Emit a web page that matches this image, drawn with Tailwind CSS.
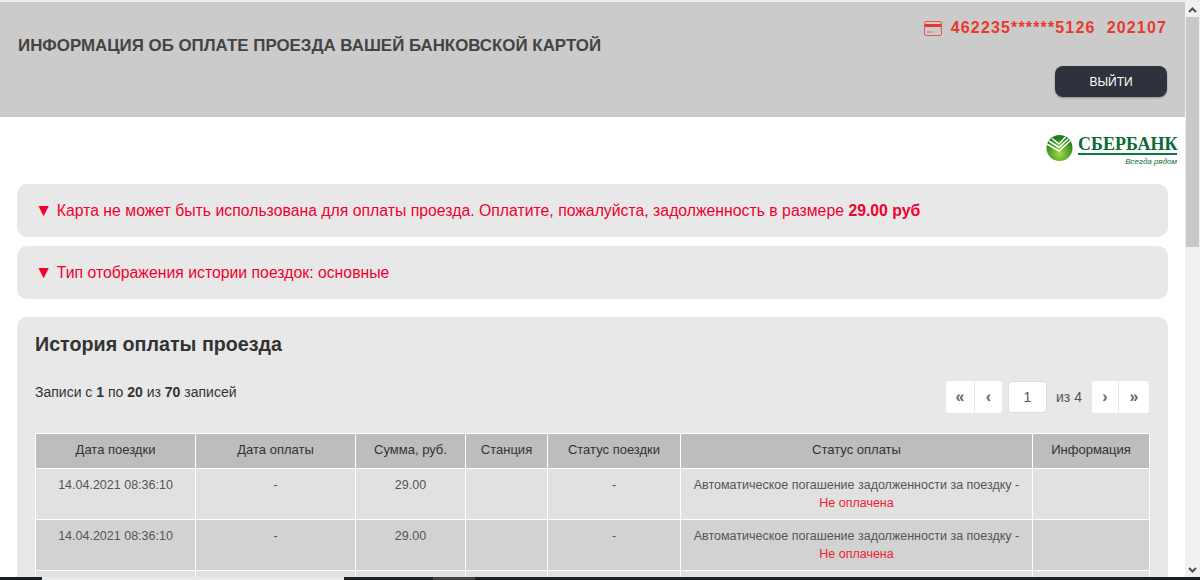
<!DOCTYPE html>
<html lang="ru">

<head>
    <meta charset="UTF-8">
    <title>История оплаты проезда</title>
    <script src="https://cdn.jsdelivr.net/npm/@tailwindcss/browser@4"></script>
</head>

<body class="h-[580px] overflow-hidden bg-white font-['Liberation_Sans',Arial,sans-serif] text-[#333]">
    <div class="flex h-[577px] overflow-hidden border-t-[2px] border-[#eeeeee]">
        <div class="min-w-0 flex-1 overflow-hidden">
            <!-- Header -->
            <header class="flex h-[115px] justify-between bg-[#cbcbcb] px-[18px]">
                <h1 class="mt-[34px] text-[16.9px] leading-[20px] font-bold text-[#444]">ИНФОРМАЦИЯ ОБ ОПЛАТЕ ПРОЕЗДА ВАШЕЙ БАНКОВСКОЙ КАРТОЙ</h1>
                <div class="flex flex-col items-end">
                    <div class="mt-[16px] flex h-[20px] items-center gap-[9px] text-[16px] font-bold tracking-[1.15px] text-[#e8392f]">
                        <svg width="18" height="15" viewBox="0 0 18 15" fill="none">
                            <rect x="0.5" y="0.5" width="17" height="14" rx="1.5" stroke="#e8574f" />
                            <rect x="1" y="3" width="16" height="3" fill="#e8392f" />
                            <path d="M3 11h3M7 11h2" stroke="#e8574f" />
                        </svg>
                        <span class="whitespace-pre">462235******5126  202107</span>
                    </div>
                    <button class="mt-[28px] h-[31px] w-[112px] rounded-[8px] bg-[#2f313c] text-[12px] text-white shadow-[0_1px_2px_rgba(0,0,0,0.3)]">ВЫЙТИ</button>
                </div>
            </header>

            <div class="px-[17px]">
                <!-- Logo -->
                <div class="mr-[-9px] flex h-[67px] justify-end pt-[18px]">
                    <div class="flex gap-[5px]">
                        <svg width="27" height="26" viewBox="0 0 27 26">
                            <defs>
                                <radialGradient id="sber" cx="0.5" cy="0.72" r="0.6">
                                    <stop offset="0" stop-color="#a6d94a" />
                                    <stop offset="0.6" stop-color="#55a82a" />
                                    <stop offset="1" stop-color="#1f7d1e" />
                                </radialGradient>
                            </defs>
                            <circle cx="13.500" cy="13" r="13" fill="url(#sber)" />
                            <path d="M1 9 13 16 24 6" stroke="#fff" stroke-width="1.500" fill="none" />
                            <path d="M3 6 13 12.500 22 4" stroke="#fff" stroke-width="1.500" fill="none" />
                            <path d="M6 3.500 13 9 19.500 2" stroke="#fff" stroke-width="1.500" fill="none" />
                        </svg>
                        <div class="mt-[2px] w-[99px]">
                            <div class="h-[18px] border-b-[2px] border-[#0b7a3b] font-['Liberation_Serif',serif] text-[18px] leading-[15px] font-bold text-[#0b6b36]">СБЕРБАНК</div>
                            <div class="mt-[2px] text-right text-[8px] leading-[10px] italic text-[#0b6b36]">Всегда рядом</div>
                        </div>
                    </div>
                </div>

                <!-- Notices -->
                <div class="flex h-[53px] items-center rounded-[10px] bg-[#e8e8e8] pl-[18px] text-[15.8px] text-[#f0002f]">
                    <span><span class="text-[17.5px] leading-[20px]">▼</span> Карта не может быть использована для оплаты проезда. Оплатите, пожалуйста, задолженность в размере <b>29.00 руб</b></span>
                </div>
                <div class="mt-[9px] flex h-[53px] items-center rounded-[10px] bg-[#e8e8e8] pl-[18px] text-[15.8px] text-[#f0002f]">
                    <span><span class="text-[17.5px] leading-[20px]">▼</span> Тип отображения истории поездок: основные</span>
                </div>

                <!-- History -->
                <section class="mt-[18px] h-[300px] rounded-t-[10px] bg-[#e8e8e8] px-[18px]">
                    <h2 class="pt-[15px] text-[19.7px] leading-[24px] font-bold text-[#333]">История оплаты проезда</h2>

                    <div class="mt-[16px] flex h-[61px] items-start justify-between">
                        <div class="mt-[10px] text-[14px] leading-[20px]">Записи с <b>1</b> по <b>20</b> из <b>70</b> записей</div>
                        <div class="mt-[9px] mr-[1px] flex items-center text-[14px] text-[#555]">
                            <div class="flex h-[32px] items-center overflow-hidden rounded-[3px] bg-white text-[16px] font-bold text-[#666]">
                                <span class="flex h-full w-[29px] items-center justify-center border-r border-[#e8e8e8]">«</span>
                                <span class="flex h-full w-[27px] items-center justify-center">‹</span>
                            </div>
                            <div class="ml-[6px] h-[32px] w-[39px] rounded-[4px] border border-[#ddd] bg-white text-center leading-[30px]">1</div>
                            <span class="ml-[9px] mr-[10px] w-[26px]">из 4</span>
                            <div class="flex h-[32px] items-center overflow-hidden rounded-[3px] bg-white text-[16px] font-bold text-[#666]">
                                <span class="flex h-full w-[27px] items-center justify-center border-r border-[#e8e8e8]">›</span>
                                <span class="flex h-full w-[30px] items-center justify-center">»</span>
                            </div>
                        </div>
                    </div>

                    <table class="w-full table-fixed border-collapse text-center text-[12.5px] leading-[18px] text-[#555]">
                        <colgroup>
                            <col class="w-[160px]">
                            <col class="w-[160px]">
                            <col class="w-[110px]">
                            <col class="w-[82px]">
                            <col class="w-[133px]">
                            <col class="w-[352px]">
                            <col>
                        </colgroup>
                        <thead>
                            <tr class="h-[35px] bg-[#bdbdbd] text-[13px] text-[#333]">
                                <th class="border border-white pb-[2px] font-normal">Дата поездки</th>
                                <th class="border border-white pb-[2px] font-normal">Дата оплаты</th>
                                <th class="border border-white pb-[2px] font-normal">Сумма, руб.</th>
                                <th class="border border-white pb-[2px] font-normal">Станция</th>
                                <th class="border border-white pb-[2px] font-normal">Статус поездки</th>
                                <th class="border border-white pb-[2px] font-normal">Статус оплаты</th>
                                <th class="border border-white pb-[2px] font-normal">Информация</th>
                            </tr>
                        </thead>
                        <tbody>
                            <tr class="h-[51px] bg-[#e1e1e1] align-top">
                                <td class="border border-white pt-[7px]">14.04.2021 08:36:10</td>
                                <td class="border border-white pt-[7px]">-</td>
                                <td class="border border-white pt-[7px]">29.00</td>
                                <td class="border border-white pt-[7px]"></td>
                                <td class="border border-white pt-[7px]">-</td>
                                <td class="border border-white pt-[7px]">Автоматическое погашение задолженности за поездку -<br><span class="text-[#f0202f]">Не оплачена</span></td>
                                <td class="border border-white pt-[7px]"></td>
                            </tr>
                            <tr class="h-[51px] bg-[#d2d2d2] align-top">
                                <td class="border border-white pt-[7px]">14.04.2021 08:36:10</td>
                                <td class="border border-white pt-[7px]">-</td>
                                <td class="border border-white pt-[7px]">29.00</td>
                                <td class="border border-white pt-[7px]"></td>
                                <td class="border border-white pt-[7px]">-</td>
                                <td class="border border-white pt-[7px]">Автоматическое погашение задолженности за поездку -<br><span class="text-[#f0202f]">Не оплачена</span></td>
                                <td class="border border-white pt-[7px]"></td>
                            </tr>
                            <tr class="h-[51px] bg-[#e1e1e1]">
                                <td class="border border-white"></td>
                                <td class="border border-white"></td>
                                <td class="border border-white"></td>
                                <td class="border border-white"></td>
                                <td class="border border-white"></td>
                                <td class="border border-white"></td>
                                <td class="border border-white"></td>
                            </tr>
                        </tbody>
                    </table>
                </section>
            </div>
        </div>

        <!-- Scrollbar -->
        <div class="flex w-[15px] flex-col items-center bg-[#f1f1f1] text-[#505050]">
            <div class="flex h-[15px] items-center">
                <svg width="9" height="6" viewBox="0 0 9 6" fill="none"><path d="M1 5 4.500 1.500 8 5" stroke="currentColor" stroke-width="2" /></svg>
            </div>
            <div class="h-[230px] w-[13px] bg-[#c8c8c8]"></div>
            <div class="mt-auto flex h-[15px] items-center">
                <svg width="9" height="6" viewBox="0 0 9 6" fill="none"><path d="M1 1 4.500 4.500 8 1" stroke="currentColor" stroke-width="2" /></svg>
            </div>
        </div>
    </div>

    <!-- Taskbar edge -->
    <div class="flex h-[3px] bg-[#1c2023]">
        <div class="ml-[42px] w-[302px] bg-[#e8e8e8]"></div>
        <div class="ml-[89px] w-[42px] bg-[#444]"></div>
    </div>
</body>

</html>
